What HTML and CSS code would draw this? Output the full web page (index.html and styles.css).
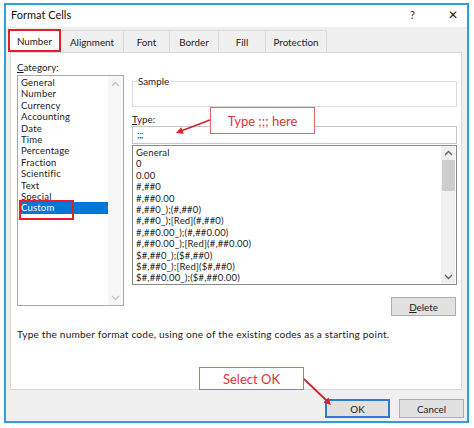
FILE: index.html
```html
<!DOCTYPE html>
<html>
<head>
<meta charset="utf-8">
<link rel="stylesheet" href="styles.css">
</head>
<body>
<div class="window">
  <div class="titlebar">
    <span class="title">Format Cells</span>
    <span class="tb-controls"><span class="help">?</span><span class="close">✕</span></span>
  </div>
  <div class="client">
    <div class="tabs">
      <div class="tab active">Number</div>
      <div class="tab t-align">Alignment</div>
      <div class="tab t-font">Font</div>
      <div class="tab t-border">Border</div>
      <div class="tab t-fill">Fill</div>
      <div class="tab t-prot">Protection</div>
    </div>
    <div class="panel">
      <div class="top">
        <div class="leftcol">
          <div class="label"><u>C</u>ategory:</div>
          <div class="listbox cat">
            <div class="items">
              <div class="item">General</div>
              <div class="item">Number</div>
              <div class="item">Currency</div>
              <div class="item">Accounting</div>
              <div class="item">Date</div>
              <div class="item">Time</div>
              <div class="item">Percentage</div>
              <div class="item">Fraction</div>
              <div class="item">Scientific</div>
              <div class="item">Text</div>
              <div class="item">Special</div>
              <div class="item selected">Custom</div>
            </div>
            <div class="scroll light">
              <svg class="chev" width="9" height="6" viewBox="0 0 9 6"><path d="M1 5 L4.5 1.5 L8 5" fill="none" stroke="#c4c4c4" stroke-width="1.3"/></svg>
              <svg class="chev" width="9" height="6" viewBox="0 0 9 6"><path d="M1 1 L4.5 4.5 L8 1" fill="none" stroke="#c4c4c4" stroke-width="1.3"/></svg>
            </div>
          </div>
        </div>
        <div class="rightcol">
          <div class="sample">
            <span class="legend">Sample</span>
          </div>
          <div class="label typelabel"><u>T</u>ype:</div>
          <div class="input">;;;</div>
          <div class="listbox types">
            <div class="items">
              <div class="item">General</div>
              <div class="item">0</div>
              <div class="item">0.00</div>
              <div class="item">#,##0</div>
              <div class="item">#,##0.00</div>
              <div class="item">#,##0_);(#,##0)</div>
              <div class="item">#,##0_);[Red](#,##0)</div>
              <div class="item">#,##0.00_);(#,##0.00)</div>
              <div class="item">#,##0.00_);[Red](#,##0.00)</div>
              <div class="item">$#,##0_);($#,##0)</div>
              <div class="item">$#,##0_);[Red]($#,##0)</div>
              <div class="item">$#,##0.00_);($#,##0.00)</div>
            </div>
            <div class="scroll">
              <svg class="chev" width="9" height="6" viewBox="0 0 9 6"><path d="M1 5 L4.5 1.5 L8 5" fill="none" stroke="#606060" stroke-width="1.3"/></svg>
              <div class="thumb"></div>
              <div class="spacer"></div>
              <svg class="chev" width="9" height="6" viewBox="0 0 9 6"><path d="M1 1 L4.5 4.5 L8 1" fill="none" stroke="#606060" stroke-width="1.3"/></svg>
            </div>
          </div>
          <div class="btnrow"><div class="btn"><u>D</u>elete</div></div>
        </div>
      </div>
      <div class="desc">Type the number format code, using one of the existing codes as a starting point.</div>
    </div>
    <div class="footer">
      <div class="btn ok">OK</div>
      <div class="btn">Cancel</div>
    </div>
  </div>
</div>

<div class="callout callout-type">Type ;;; here</div>
<div class="callout callout-ok">Select OK</div>
<svg class="arrows" width="474" height="428" viewBox="0 0 474 428">
  <line x1="210" y1="120" x2="181" y2="131" stroke="#d4212b" stroke-width="1.6"/>
  <polygon points="176,133 183.8,133.8 181.2,127.2" fill="#d4212b"/>
  <line x1="304" y1="379" x2="327" y2="401" stroke="#d4212b" stroke-width="1.8"/>
  <polygon points="331,405 323.6,402.6 328.4,397.6" fill="#d4212b"/>
</svg>
</body>
</html>
```

FILE: styles.css
```css
* { box-sizing: border-box; }
html, body { margin: 0; padding: 0; }
body {
  width: 474px;
  height: 428px;
  background: #ffffff;
  position: relative;
  font-family: Lato, "Noto Sans", sans-serif;
  font-size: 9.5px;
  color: #1a1a1a;
  overflow: hidden;
}
.window {
  margin: 3px 0 0 4px;
  width: 465px;
  height: 420px;
  border: 2px solid #2ca0dc;
  display: flex;
  flex-direction: column;
}
.titlebar {
  height: 22px;
  background: #ffffff;
  display: flex;
  align-items: center;
  justify-content: space-between;
  padding-left: 5px;
  padding-bottom: 4px;
}
.title { font-size: 11px; color: #111; }
.tb-controls { display: flex; align-items: center; }
.help { font-size: 11px; margin-right: 33px; color: #222; }
.close { font-size: 12px; margin-right: 9px; color: #222; }
.client {
  flex: 1;
  background: #f0f0f0;
  display: flex;
  flex-direction: column;
  padding-top: 3px;
}
.tabs {
  display: flex;
  height: 22px;
  margin-left: 2px;
}
.tab {
  height: 22px;
  display: flex;
  align-items: center;
  justify-content: center;
  border: 1px solid #d9d9d9;
  border-bottom: none;
  border-left: none;
  background: #f0f0f0;
  color: #222;
  font-size: 9.8px;
}
.t-align { width: 63px; }
.t-font { width: 46px; }
.t-border { width: 49px; }
.t-fill { width: 47px; }
.t-prot { width: 61px; }
.tab.active {
  background: #ffffff;
  width: 53px;
  height: 23px;
  margin-top: -1px;
  border-left: 1px solid #d9d9d9;
  outline: 2px solid #e0212b;
  outline-offset: -2px;
  position: relative;
  z-index: 2;
}
.panel {
  height: 338px;
  margin: 0 5px 0 4px;
  background: #ffffff;
  border: 1px solid #d9d9d9;
  padding: 8px 0 0 6px;
  display: flex;
  flex-direction: column;
}
.top { display: flex; }
.leftcol { width: 107px; margin-right: 8px; display: flex; flex-direction: column; }
.rightcol { width: 325px; display: flex; flex-direction: column; }
.label { height: 13px; line-height: 13px; margin-bottom: 1px; font-size: 9.8px; }
.listbox {
  display: flex;
  border: 1px solid #a9a9a9;
  background: #fff;
}
.listbox .items { flex: 1; padding-top: 1px; }
.item { height: 11.4px; line-height: 11.4px; padding-left: 3px; white-space: nowrap; font-size: 9.5px; }
.cat { height: 231px; }
.cat .item { font-size: 9.5px; letter-spacing: 0.2px; }
.cat .item.selected {
  background: #0078d7;
  color: #fff;
  margin-left: 1px;
  padding-left: 2px;
  position: relative;
}
.cat .item.selected::after {
  content: "";
  position: absolute;
  left: 0;
  top: -2px;
  width: 51px;
  height: 16px;
  border: 2px solid #e0212b;
}
.scroll {
  width: 15px;
  display: flex;
  flex-direction: column;
  align-items: center;
  justify-content: space-between;
  padding: 5px 0 4px;
  background: #f0f0f0;
}
.scroll.light { background: #f7f7f7; }
.types .scroll { width: 14px; margin-right: 1px; padding-top: 4px; }
.thumb { width: 13px; height: 31px; background: #cdcdcd; margin-top: 4px; }
.spacer { flex: 1; }
.sample {
  margin-top: 20px;
  height: 26px;
  border: 1px solid #dcdcdc;
  padding-left: 4px;
}
.legend {
  display: inline-block;
  margin-top: -7px;
  vertical-align: top;
  background: #fff;
  padding: 0 1px;
  line-height: 12px;
  color: #222;
  font-size: 9.8px;
}
.typelabel { margin-top: 6px; margin-bottom: 0; }
.input {
  height: 18px;
  border: 1px solid #c6c6c6;
  padding-left: 4px;
  line-height: 16px;
  font-size: 9px;
  letter-spacing: -0.3px;
}
.types { height: 140px; border-color: #8a8a8a; margin-top: 1px; }
.types .item { letter-spacing: 0.15px; }
.btnrow { display: flex; justify-content: flex-end; margin-top: 12px; margin-right: 1px; }
.btn {
  width: 65px;
  height: 19px;
  background: #e1e1e1;
  border: 1px solid #adadad;
  display: flex;
  align-items: center;
  justify-content: center;
  color: #1a1a1a;
  font-size: 9.8px;
}
.desc { margin-top: 12px; line-height: 13px; color: #1a1a1a; font-size: 10.1px; letter-spacing: 0.2px; }
.footer {
  display: flex;
  justify-content: flex-end;
  gap: 9px;
  margin-top: 9px;
  margin-right: 3px;
}
.btn.ok { border: 2px solid #2e7bd0; }
.callout {
  position: absolute;
  background: #ffffff;
  border: 1.5px solid #e6636b;
  color: #e0323b;
  font-size: 13px;
  display: flex;
  align-items: center;
  justify-content: center;
}
.callout-type { left: 210px; top: 107px; width: 105px; height: 27px; }
.callout-ok { left: 199px; top: 367px; width: 105px; height: 23px; }
.arrows { position: absolute; left: 0; top: 0; pointer-events: none; }
```
